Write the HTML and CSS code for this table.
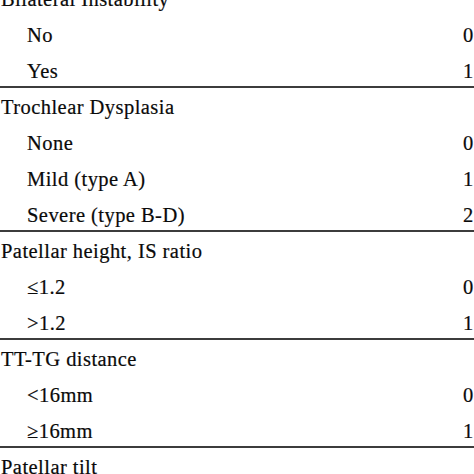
FILE: index.html
```html
<!DOCTYPE html>
<html>
<head>
<meta charset="utf-8">
<link rel="stylesheet" href="styles.css">
</head>
<body>
<div class="table">
  <div class="group">
    <div class="row head"><span class="label">Bilateral Instability</span><span class="val"></span></div>
    <div class="row"><span class="label sub">No</span><span class="val">0</span></div>
    <div class="row"><span class="label sub">Yes</span><span class="val">1</span></div>
  </div>
  <div class="group">
    <div class="row head"><span class="label">Trochlear Dysplasia</span><span class="val"></span></div>
    <div class="row"><span class="label sub">None</span><span class="val">0</span></div>
    <div class="row"><span class="label sub">Mild (type A)</span><span class="val">1</span></div>
    <div class="row"><span class="label sub">Severe (type B-D)</span><span class="val">2</span></div>
  </div>
  <div class="group">
    <div class="row head"><span class="label">Patellar height, IS ratio</span><span class="val"></span></div>
    <div class="row"><span class="label sub">≤1.2</span><span class="val">0</span></div>
    <div class="row"><span class="label sub">&gt;1.2</span><span class="val">1</span></div>
  </div>
  <div class="group">
    <div class="row head"><span class="label">TT-TG distance</span><span class="val"></span></div>
    <div class="row"><span class="label sub">&lt;16mm</span><span class="val">0</span></div>
    <div class="row"><span class="label sub">≥16mm</span><span class="val">1</span></div>
  </div>
  <div class="group">
    <div class="row head"><span class="label">Patellar tilt</span><span class="val"></span></div>
  </div>
</div>
</body>
</html>
```
FILE: styles.css
```css
html, body {
  margin: 0;
  padding: 0;
  background: #ffffff;
  overflow: hidden;
}
body {
  width: 474px;
  height: 474px;
  font-family: "Liberation Serif", "Times New Roman", serif;
  font-size: 20.5px;
  letter-spacing: 0.45px;
  color: #0a0a0a;
  -webkit-text-stroke: 0.2px #0a0a0a;
}
.table {
  margin-top: -20px;
  display: flex;
  flex-direction: column;
}
.group {
  display: flex;
  flex-direction: column;
}
.row {
  display: grid;
  grid-template-columns: 463px 1fr;
  height: 36px;
  line-height: 38px;
  box-sizing: border-box;
  white-space: nowrap;
}
.group .row:last-child {
  border-bottom: 2px solid #3c3c3c;
}
.group:last-child .row:last-child {
  border-bottom: none;
}
.label {
  padding-left: 1px;
}
.label.sub {
  padding-left: 27px;
}
.val {
  overflow: hidden;
  letter-spacing: 0;
}
```
